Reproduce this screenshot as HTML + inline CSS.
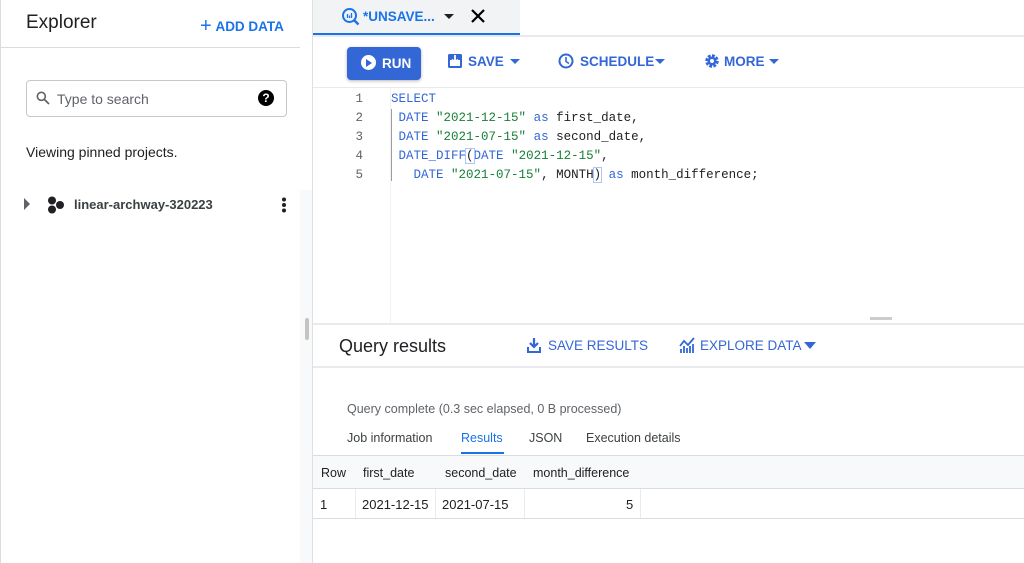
<!DOCTYPE html>
<html><head><style>
*{margin:0;padding:0;box-sizing:border-box}
body{width:1024px;height:563px;position:relative;overflow:hidden;background:#fff;font-family:"Liberation Sans",sans-serif;color:#202124}
.a{position:absolute}
.blue{color:#1a73e8}
.mono{font-family:"Liberation Mono",monospace;font-size:12.5px}
.kw{color:#3367d6}.str{color:#188038}
.tb{font-size:13.5px;font-weight:bold;color:#3367d6}
</style></head><body>
<!-- left panel -->
<div class="a" style="left:0;top:0;width:1px;height:563px;background:#dadce0"></div>
<div class="a" style="left:0;top:47px;width:300px;height:1px;background:#dadce0"></div>
<div class="a" style="left:26px;top:12px;font-size:19px">Explorer</div>
<div class="a blue" style="left:200px;top:14px;font-size:13.5px;font-weight:bold"><span style="font-size:20px;font-weight:normal;position:relative;top:1px">+</span>&nbsp;ADD DATA</div>
<div class="a" style="left:26px;top:80px;width:261px;height:37px;border:1px solid #c8c8c8;border-radius:4px"></div>
<svg class="a" style="left:35px;top:90px" width="16" height="16" viewBox="0 0 24 24"><circle cx="9.5" cy="9.5" r="6" fill="none" stroke="#5f6368" stroke-width="2.4"/><path d="M14 14l7 7" stroke="#5f6368" stroke-width="2.6"/></svg>
<div class="a" style="left:57px;top:91px;font-size:14px;color:#5f6368">Type to search</div>
<div class="a" style="left:258px;top:90px;width:16px;height:16px;border-radius:50%;background:#000;color:#fff;font-size:12px;font-weight:bold;text-align:center;line-height:16px">?</div>
<div class="a" style="left:26px;top:144px;font-size:14px">Viewing pinned projects.</div>
<div class="a" style="left:24px;top:198px;width:0;height:0;border-left:6px solid #5f6368;border-top:6px solid transparent;border-bottom:6px solid transparent"></div>
<svg class="a" style="left:46px;top:196px" width="20" height="18"><circle cx="6" cy="4.5" r="4" fill="#202124"/><circle cx="6" cy="13.5" r="4" fill="#202124"/><circle cx="14" cy="9" r="4" fill="#202124"/></svg>
<div class="a" style="left:74px;top:197px;font-size:13px;font-weight:bold;color:#3c4043">linear-archway-320223</div>
<svg class="a" style="left:281px;top:197px" width="6" height="16"><circle cx="3" cy="2.5" r="2" fill="#202124"/><circle cx="3" cy="8" r="2" fill="#202124"/><circle cx="3" cy="13.5" r="2" fill="#202124"/></svg>
<div class="a" style="left:300px;top:190px;width:12px;height:373px;background:#f8f9fa"></div>
<div class="a" style="left:305px;top:318px;width:4px;height:22px;background:#c4c4c4;border-radius:2px"></div>
<div class="a" style="left:312px;top:0;width:1px;height:563px;background:#e0e0e0"></div>
<!-- tab -->
<div class="a" style="left:313px;top:0;width:207px;height:35px;background:#f1f3f4;border-bottom:2px solid #1a73e8"></div>
<svg class="a" style="left:341px;top:7px" width="20" height="20" viewBox="0 0 20 20"><circle cx="8.5" cy="8.5" r="6.5" fill="none" stroke="#1a73e8" stroke-width="2"/><path d="M13 13l4.5 4.5" stroke="#1a73e8" stroke-width="2.4"/><path d="M6.5 7v4M8.5 8.5v2.5M10.5 6v5" stroke="#1a73e8" stroke-width="1.3"/></svg>
<div class="a blue" style="left:363px;top:9px;font-size:13.5px;font-weight:bold">*UNSAVE...</div>
<div class="a" style="left:444px;top:14px;width:0;height:0;border-top:5px solid #202124;border-left:5px solid transparent;border-right:5px solid transparent"></div>
<svg class="a" style="left:471px;top:9px" width="14" height="14"><path d="M1 1L13 13M13 1L1 13" stroke="#000" stroke-width="2.2"/></svg>
<div class="a" style="left:313px;top:35px;width:711px;height:2px;background:#e8eaed"></div>
<!-- toolbar -->
<div class="a" style="left:347px;top:47px;width:74px;height:33px;background:#3367d6;border-radius:4px;box-shadow:0 1px 3px rgba(0,0,0,.3)"></div>
<div class="a" style="left:361px;top:55px;width:15px;height:15px;border-radius:50%;background:#fff"></div>
<div class="a" style="left:366px;top:58.5px;width:0;height:0;border-left:6px solid #3367d6;border-top:4px solid transparent;border-bottom:4px solid transparent"></div>
<div class="a" style="left:382px;top:56px;font-size:13.5px;font-weight:bold;color:#fff">RUN</div>
<svg class="a" style="left:447px;top:53px" width="16" height="16" viewBox="0 0 16 16"><rect x="1" y="1" width="14" height="14" rx="1.5" fill="#3367d6"/><rect x="3" y="7" width="10" height="6" fill="#fff"/><path d="M8 2v7M5 6.5l3 3 3-3" stroke="#fff" stroke-width="1.8" fill="none"/></svg>
<div class="a tb" style="left:468px;top:54px">SAVE</div>
<div class="a" style="left:510px;top:59px;border-top:5px solid #3367d6;border-left:5px solid transparent;border-right:5px solid transparent"></div>
<svg class="a" style="left:558px;top:53px" width="16" height="16"><circle cx="8" cy="8" r="6.5" fill="none" stroke="#3367d6" stroke-width="2"/><path d="M8 4v4.5l3 2" stroke="#3367d6" stroke-width="1.6" fill="none"/></svg>
<div class="a tb" style="left:580px;top:54px">SCHEDULE</div>
<div class="a" style="left:655px;top:59px;border-top:5px solid #3367d6;border-left:5px solid transparent;border-right:5px solid transparent"></div>
<svg class="a" style="left:704px;top:53px" width="16" height="16" viewBox="0 0 16 16"><circle cx="8" cy="8" r="5" fill="none" stroke="#3367d6" stroke-width="3.5" stroke-dasharray="2.6 1.3"/><circle cx="8" cy="8" r="4.5" fill="#3367d6"/><circle cx="8" cy="8" r="2" fill="#fff"/></svg>
<div class="a tb" style="left:724px;top:54px">MORE</div>
<div class="a" style="left:769px;top:59px;border-top:5px solid #3367d6;border-left:5px solid transparent;border-right:5px solid transparent"></div>
<div class="a" style="left:313px;top:87px;width:711px;height:1px;background:#e8eaed"></div>
<!-- editor -->
<div class="a mono" style="left:345px;top:90px;line-height:19px;color:#5f6368;text-align:right;width:18px">1<br>2<br>3<br>4<br>5</div>
<div class="a" style="left:391px;top:109px;width:1px;height:72px;background:#9e9e9e"></div>
<div class="a" style="left:390px;top:88px;width:1px;height:235px;background:#f1f1f1"></div>
<pre class="a mono" style="left:391px;top:90px;line-height:19px;color:#202124"><span class="kw">SELECT</span>
 <span class="kw">DATE</span> <span class="str">"2021-12-15"</span> <span class="kw">as</span> first_date,
 <span class="kw">DATE</span> <span class="str">"2021-07-15"</span> <span class="kw">as</span> second_date,
 <span class="kw">DATE_DIFF</span><span style="outline:1px solid #a8c7fa">(</span><span class="kw">DATE</span> <span class="str">"2021-12-15"</span>,
   <span class="kw">DATE</span> <span class="str">"2021-07-15"</span>, MONTH<span style="outline:1px solid #a8c7fa">)</span> <span class="kw">as</span> month_difference;</pre>
<div class="a" style="left:870px;top:317px;width:22px;height:3px;background:#ccc"></div>
<!-- results header -->
<div class="a" style="left:313px;top:323px;width:711px;height:2px;background:#e8eaed"></div>
<div class="a" style="left:339px;top:336px;font-size:18px">Query results</div>
<svg class="a" style="left:527px;top:337px" width="14" height="16" viewBox="0 0 14 16"><path d="M7 1v9M3 6l4 4 4-4" stroke="#3367d6" stroke-width="2.2" fill="none"/><path d="M1 10v5h12v-5" stroke="#3367d6" stroke-width="2" fill="none"/></svg>
<div class="a" style="left:548px;top:338px;font-size:13.5px;color:#3367d6">SAVE RESULTS</div>
<svg class="a" style="left:679px;top:337px" width="17" height="16" viewBox="0 0 17 16"><path d="M1 9l4-5 4 4 6-7" stroke="#3367d6" stroke-width="1.8" fill="none"/><path d="M2 16v-4M5 16v-7M8 16v-5M11 16v-7M14 16v-9" stroke="#3367d6" stroke-width="1.8"/></svg>
<div class="a" style="left:700px;top:338px;font-size:13.5px;color:#3367d6">EXPLORE DATA</div>
<div class="a" style="left:804px;top:342px;border-top:7px solid #3367d6;border-left:6px solid transparent;border-right:6px solid transparent"></div>
<div class="a" style="left:313px;top:366px;width:711px;height:2px;background:#e8eaed"></div>
<div class="a" style="left:347px;top:402px;font-size:12.5px;color:#5f6368">Query complete (0.3 sec elapsed, 0 B processed)</div>
<div class="a" style="left:347px;top:431px;font-size:12.5px;color:#3c4043">Job information</div>
<div class="a" style="left:461px;top:431px;font-size:12.5px;color:#1a73e8">Results</div>
<div class="a" style="left:461px;top:452px;width:43px;height:2px;background:#1a73e8"></div>
<div class="a" style="left:529px;top:431px;font-size:12.5px;color:#3c4043">JSON</div>
<div class="a" style="left:586px;top:431px;font-size:12.5px;color:#3c4043">Execution details</div>
<!-- table -->
<div class="a" style="left:313px;top:455px;width:711px;height:34px;background:#f8f9fa;border-top:1px solid #dadce0;border-bottom:1px solid #dadce0"></div>
<div class="a" style="left:321px;top:466px;font-size:12.5px">Row</div>
<div class="a" style="left:363px;top:466px;font-size:12.5px">first_date</div>
<div class="a" style="left:445px;top:466px;font-size:12.5px">second_date</div>
<div class="a" style="left:533px;top:466px;font-size:12.5px">month_difference</div>
<div class="a" style="left:313px;top:518px;width:711px;height:1px;background:#dadce0"></div>
<div class="a" style="left:355px;top:489px;width:1px;height:29px;background:#e8eaed"></div>
<div class="a" style="left:435px;top:489px;width:1px;height:29px;background:#e8eaed"></div>
<div class="a" style="left:524px;top:489px;width:1px;height:29px;background:#e8eaed"></div>
<div class="a" style="left:640px;top:489px;width:1px;height:29px;background:#e8eaed"></div>
<div class="a" style="left:320px;top:497px;font-size:13px">1</div>
<div class="a" style="left:362px;top:497px;font-size:13px">2021-12-15</div>
<div class="a" style="left:442px;top:497px;font-size:13px">2021-07-15</div>
<div class="a" style="left:626px;top:497px;font-size:13px">5</div>
</body></html>
